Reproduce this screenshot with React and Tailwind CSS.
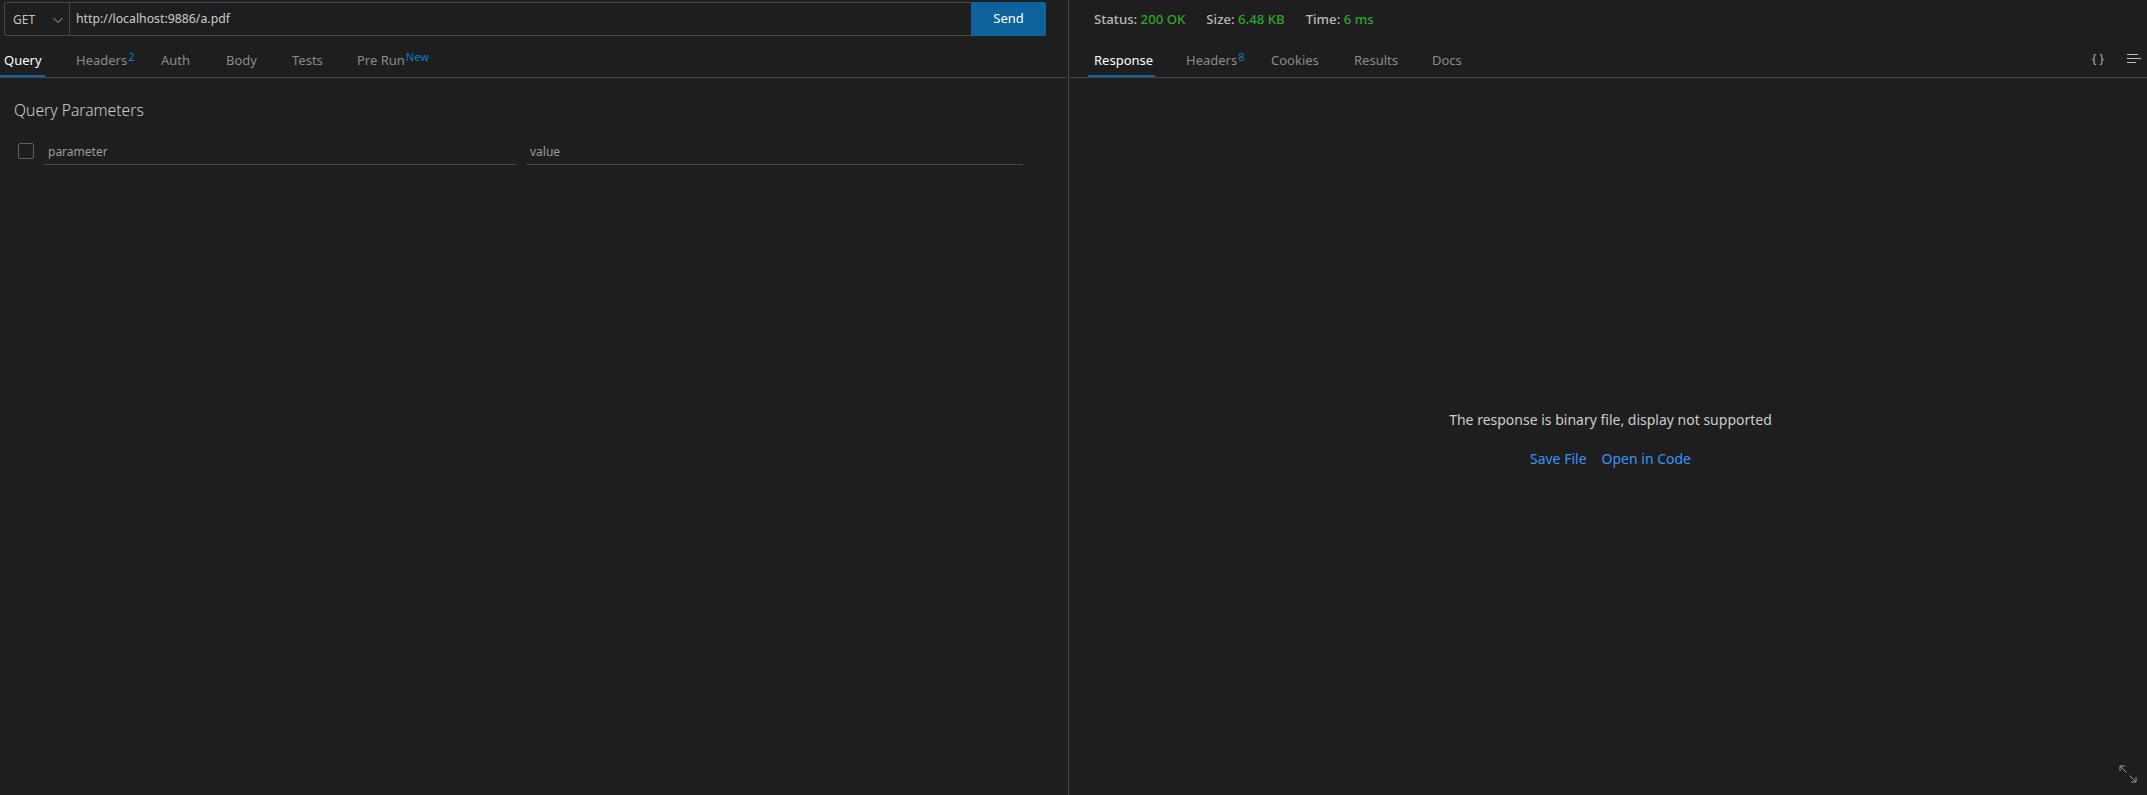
const font = 'font-["Noto_Sans","Open_Sans",sans-serif]'

function Tab({ label, sup, active, className }) {
    return (
        <div className={`relative h-full flex items-start pt-[13px] text-[13px] leading-[18px] ${active ? 'text-white' : 'text-[#8b8b8b]'} ${className}`}>
            {label}
            {sup && <sup className="ml-[1px] mt-[-1px] text-[11px] leading-[14px] top-0 text-[#0e7ac4]">{sup}</sup>}
            {active && <span className="absolute left-0 right-0 bottom-0 h-[2px] bg-[#0e639c]" />}
        </div>
    )
}

function ParamInput({ placeholder, className }) {
    return (
        <div className={`h-[23px] border-b border-[#474747] text-[12px] leading-[14px] text-[#9d9d9d] pl-[4px] pt-[3px] ${className}`}>
            {placeholder}
        </div>
    )
}

export default function App() {
    return (
        <div className={`h-[795px] w-full flex bg-[#1e1e1e] overflow-hidden ${font}`}>
            <section className="w-[1068px] shrink-0 flex flex-col">
                <div className="h-[38px] flex items-start pt-[2px] pl-[4px]">
                    <div className="w-[967px] h-[34px] flex items-stretch border-y border-l border-[#474747] rounded-l-[2px]">
                        <div className="w-[65px] flex items-center justify-between border-r border-[#474747] pl-[8px] pr-[6px] pt-[2px] text-[12px] text-[#c4c4c4]">
                            GET
                            <svg width="10" height="10" viewBox="0 0 10 10" fill="none" stroke="#a8a8a8" strokeWidth="1">
                                <path d="M0.5 3 L5 7.5 L9.5 3" />
                            </svg>
                        </div>
                        <div className="flex-1 flex items-center pl-[6px] text-[12.3px] text-[#cccccc]">http://localhost:9886/a.pdf</div>
                    </div>
                    <button className="w-[75px] h-[34px] bg-[#0e639c] rounded-r-[2px] text-[13px] text-white">Send</button>
                </div>
                <div className="h-[40px] flex border-b border-[#474747] mr-[2px]">
                    <Tab label="Query" active className="pl-[4px] pr-[4px] w-[45px]" />
                    <Tab label="Headers" sup="2" className="ml-[31px] w-[85px]" />
                    <Tab label="Auth" className="w-[65px]" />
                    <Tab label="Body" className="w-[66px]" />
                    <Tab label="Tests" className="w-[65px]" />
                    <Tab label="Pre Run" sup="New" />
                </div>
                <h2 className="mt-[21px] ml-[14px] text-[15.7px] leading-[22px] font-light text-[#cccccc]">Query Parameters</h2>
                <div className="mt-[21px] ml-[18px] flex items-start">
                    <span className="w-[16px] h-[16px] mt-[1px] border border-[#5f5f5f] rounded-[2px]" />
                    <ParamInput placeholder="parameter" className="w-[472px] ml-[10px]" />
                    <ParamInput placeholder="value" className="w-[497px] ml-[10px]" />
                </div>
            </section>
            <div className="w-px shrink-0 bg-[#474747]" />
            <section className="relative flex-1 min-w-0 flex flex-col">
                <div className="h-[38px] flex items-center gap-[21px] pl-[25px] pt-[2px] text-[13.2px] font-medium text-[#b8b8b8]">
                    <span>Status: <span className="text-[#2ea62e]">200 OK</span></span>
                    <span>Size: <span className="text-[#2ea62e]">6.48 KB</span></span>
                    <span>Time: <span className="text-[#2ea62e]">6 ms</span></span>
                </div>
                <div className="h-[40px] flex border-b border-[#474747] ml-[1px] relative">
                    <Tab label="Response" active className="ml-[18px] pl-[6px] w-[67px]" />
                    <Tab label="Headers" sup="8" className="ml-[31px] w-[85px]" />
                    <Tab label="Cookies" className="w-[83px]" />
                    <Tab label="Results" className="w-[78px]" />
                    <Tab label="Docs" />
                    <div className="ml-auto flex items-start pt-[13px] pr-[6px]">
                        <span className="text-[12px] leading-[16px] text-[#b0b0b0] whitespace-pre mr-[23px]">{'{ }'}</span>
                        <span className="flex flex-col gap-[3px] pt-[3px] w-[14px]">
                            <span className="h-px w-[11px] bg-[#c0c0c0]" />
                            <span className="h-px w-[14px] bg-[#c0c0c0]" />
                            <span className="h-px w-[9px] bg-[#c0c0c0]" />
                        </span>
                    </div>
                </div>
                <div className="flex-1 flex flex-col items-center pl-[5px] pt-[332px]">
                    <p className="text-[14px] leading-[20px] text-[#cccccc]">The response is binary file, display not supported</p>
                    <div className="mt-[19px] flex gap-[15px] text-[14px] leading-[20px] text-[#3794ff]">
                        <a>Save File</a>
                        <a>Open in Code</a>
                    </div>
                </div>
                <svg className="absolute right-[10px] bottom-[12px]" width="18" height="18" viewBox="0 0 18 18" fill="none" stroke="#9a9a9a" strokeWidth="1">
                    <path d="M1 6 V1 H6 M1 1 L7.5 7.5 M17 12 V17 H12 M17 17 L10.5 10.5" />
                </svg>
            </section>
        </div>
    )
}
